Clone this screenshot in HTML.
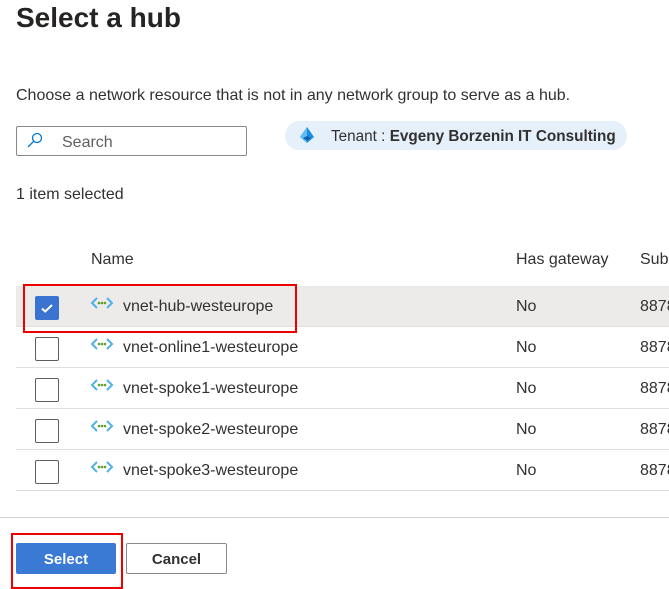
<!DOCTYPE html>
<html><head><style>
body{margin:0;width:669px;height:588px;overflow:hidden;background:#fff;font-family:"Liberation Sans",sans-serif;color:#323130;position:relative}
.a{position:absolute;white-space:nowrap}
.row{position:absolute;left:16px;width:653px;height:40px;border-bottom:1px solid #e1dfdd}
.cb{position:absolute;left:19px;top:10px;width:24px;height:24px;border:1px solid #605e5c;border-radius:2px;box-sizing:border-box;background:#fff}
.nm{position:absolute;left:107px;top:12px;font-size:16px}
.ic{position:absolute;left:74px;top:9px}
.no{position:absolute;left:500px;top:12px;font-size:16px}
.sb{position:absolute;left:624px;top:12px;font-size:16px}
</style></head><body>
<div class="a" style="left:16px;top:2px;font-size:28px;font-weight:bold;color:#252423">Select a hub</div>
<div class="a" style="left:16px;top:87px;font-size:16px">Choose a network resource that is not in any network group to serve as a hub.</div>
<div class="a" style="left:16px;top:126px;width:229px;height:28px;border:1px solid #8a8886;border-radius:2px"></div>
<svg class="a" style="left:26px;top:132px" width="18" height="16" viewBox="0 0 18 16"><circle cx="11" cy="6" r="4.5" fill="none" stroke="#0078d4" stroke-width="1.3"/><path d="M7.8 9.2 2 15" stroke="#0078d4" stroke-width="1.3"/></svg>
<div class="a" style="left:62px;top:134px;font-size:16px;color:#605e5c">Search</div>
<div class="a" style="left:285px;top:121px;width:342px;height:29px;border-radius:15px;background:#e5f0fb"></div>
<svg class="a" style="left:298px;top:126px" width="18" height="18" viewBox="0 0 18 18"><path d="M9 1 2 11l7 6 7-6z" fill="#1b8ee0"/><path d="M9 1 9 17 2 11z" fill="#5ec0f2"/><path d="M9 10 5 12 9 15 13 12z" fill="#1260b0"/></svg>
<div class="a" style="left:331px;top:128px;font-size:15.3px;color:#323130">Tenant : <b>Evgeny Borzenin IT Consulting</b></div>
<div class="a" style="left:16px;top:186px;font-size:16px">1 item selected</div>
<div class="a" style="left:91px;top:251px;font-size:16px;color:#323130">Name</div>
<div class="a" style="left:516px;top:251px;font-size:16px">Has gateway</div>
<div class="a" style="left:640px;top:251px;font-size:16px">Sub</div>
<div class="row" style="top:286px;background:#edebe9"><div class="cb" style="background:#3a73d0;border-color:#3a73d0"><svg width="22" height="22" viewBox="0 0 22 22"><path d="M6 11.5l3.2 3L16 8" fill="none" stroke="#fff" stroke-width="2"/></svg></div><svg class="ic" width="24" height="16" viewBox="0 0 24 16"><path d="M7 3 2 8l5 5M17 3l5 5-5 5" fill="none" stroke="#50b0ea" stroke-width="2"/><circle cx="9" cy="8" r="1.3" fill="#5ea02b"/><circle cx="12" cy="8" r="1.3" fill="#5ea02b"/><circle cx="15" cy="8" r="1.3" fill="#5ea02b"/></svg><div class="nm">vnet-hub-westeurope</div><div class="no">No</div><div class="sb">8878</div></div>
<div class="row" style="top:327px"><div class="cb"></div><svg class="ic" width="24" height="16" viewBox="0 0 24 16"><path d="M7 3 2 8l5 5M17 3l5 5-5 5" fill="none" stroke="#50b0ea" stroke-width="2"/><circle cx="9" cy="8" r="1.3" fill="#5ea02b"/><circle cx="12" cy="8" r="1.3" fill="#5ea02b"/><circle cx="15" cy="8" r="1.3" fill="#5ea02b"/></svg><div class="nm">vnet-online1-westeurope</div><div class="no">No</div><div class="sb">8878</div></div>
<div class="row" style="top:368px"><div class="cb"></div><svg class="ic" width="24" height="16" viewBox="0 0 24 16"><path d="M7 3 2 8l5 5M17 3l5 5-5 5" fill="none" stroke="#50b0ea" stroke-width="2"/><circle cx="9" cy="8" r="1.3" fill="#5ea02b"/><circle cx="12" cy="8" r="1.3" fill="#5ea02b"/><circle cx="15" cy="8" r="1.3" fill="#5ea02b"/></svg><div class="nm">vnet-spoke1-westeurope</div><div class="no">No</div><div class="sb">8878</div></div>
<div class="row" style="top:409px"><div class="cb"></div><svg class="ic" width="24" height="16" viewBox="0 0 24 16"><path d="M7 3 2 8l5 5M17 3l5 5-5 5" fill="none" stroke="#50b0ea" stroke-width="2"/><circle cx="9" cy="8" r="1.3" fill="#5ea02b"/><circle cx="12" cy="8" r="1.3" fill="#5ea02b"/><circle cx="15" cy="8" r="1.3" fill="#5ea02b"/></svg><div class="nm">vnet-spoke2-westeurope</div><div class="no">No</div><div class="sb">8878</div></div>
<div class="row" style="top:450px"><div class="cb"></div><svg class="ic" width="24" height="16" viewBox="0 0 24 16"><path d="M7 3 2 8l5 5M17 3l5 5-5 5" fill="none" stroke="#50b0ea" stroke-width="2"/><circle cx="9" cy="8" r="1.3" fill="#5ea02b"/><circle cx="12" cy="8" r="1.3" fill="#5ea02b"/><circle cx="15" cy="8" r="1.3" fill="#5ea02b"/></svg><div class="nm">vnet-spoke3-westeurope</div><div class="no">No</div><div class="sb">8878</div></div>
<div class="a" style="left:23px;top:284px;width:270px;height:45px;border:2px solid #e00"></div>
<div class="a" style="left:0;top:517px;width:669px;height:1px;background:#d2d0ce"></div>
<div class="a" style="left:16px;top:543px;width:100px;height:31px;background:#3a7ad5;border-radius:2px;color:#fff;font-size:15px;font-weight:bold;text-align:center;line-height:33px">Select</div>
<div class="a" style="left:126px;top:543px;width:99px;height:29px;border:1px solid #8a8886;border-radius:2px;font-size:15px;font-weight:bold;text-align:center;line-height:31px">Cancel</div>
<div class="a" style="left:11px;top:533px;width:108px;height:52px;border:2px solid #e00"></div>
</body></html>
